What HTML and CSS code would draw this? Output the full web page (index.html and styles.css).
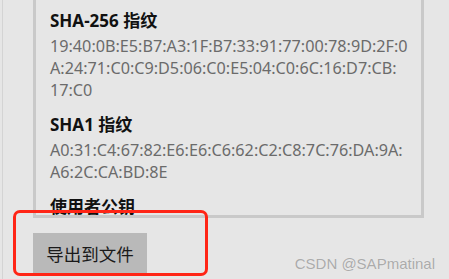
FILE: index.html
```html
<!DOCTYPE html><html lang="zh-CN">
<head>
  <meta charset="UTF-8" />
  <meta name="viewport" content="width=device-width, initial-scale=1.0" />
  <title>证书指纹</title>
  <link rel="stylesheet" href="styles.css">
</head>
<body>
  <div class="page">
    <div class="cert-box">
      <div class="field">
        <h4>SHA-256 指纹</h4>
        <p>19:40:0B:E5:B7:A3:1F:B7:33:91:77:00:78:9D:2F:0<br>A:24:71:C0:C9:D5:06:C0:E5:04:C0:6C:16:D7:CB:<br>17:C0</p>
      </div>
      <div class="field">
        <h4>SHA1 指纹</h4>
        <p>A0:31:C4:67:82:E6:E6:C6:62:C2:C8:7C:76:DA:9A:<br>A6:2C:CA:BD:8E</p>
      </div>
      <div class="field">
        <h4>使用者公钥</h4>
      </div>
    </div>
    <div class="actions">
      <button class="export-btn">导出到文件</button>
    </div>
    <div class="highlight"></div>
    <div class="watermark">CSDN @SAPmatinal</div>
  </div>
</body>
</html>
```

FILE: styles.css
```css
body {
  margin: 0;
  background: #e6e6e6;
  font-family: "Noto Sans", "Noto Sans CJK SC", sans-serif;
  width: 449px;
  height: 279px;
  overflow: hidden;
}
.page {
  position: relative;
  height: 279px;
  margin-left: 2px;
  border-left: 1px solid #d4d4d4;
}
/* certificate details, scrolled so the top edge is out of view */
.cert-box {
  margin-left: 30px;
  width: 354px;
  height: 205px;
  padding: 10px 17px 0 14px;
  border: 3px solid #c9c9c9;
  border-top: none;
  overflow: hidden;
}
.field {
  margin-bottom: 13px;
}
.field h4 {
  margin: 0 0 3px 0;
  font-size: 17px;
  line-height: 22px;
  font-weight: 700;
  color: #111;
}
.field p {
  margin: 0;
  font-size: 16.2px;
  line-height: 22px;
  color: #6b6b6b;
  white-space: nowrap;
}
.actions {
  margin: 15px 0 0 30px;
}
.export-btn {
  width: 114px;
  height: 40px;
  border: none;
  background: #b9b9b9;
  color: #1a1a1a;
  font-family: "Noto Sans CJK SC", sans-serif;
  font-size: 17.5px;
  padding: 0;
}
.highlight {
  position: absolute;
  left: 10px;
  top: 210px;
  width: 189px;
  height: 60px;
  border: 3px solid #ff2516;
  border-radius: 7px;
}
.watermark {
  position: absolute;
  right: 14px;
  bottom: 7px;
  font-family: "Liberation Sans", sans-serif;
  font-size: 15px;
  color: #ababab;
  text-shadow: 0 0 1px #f4f4f4;
}
```
